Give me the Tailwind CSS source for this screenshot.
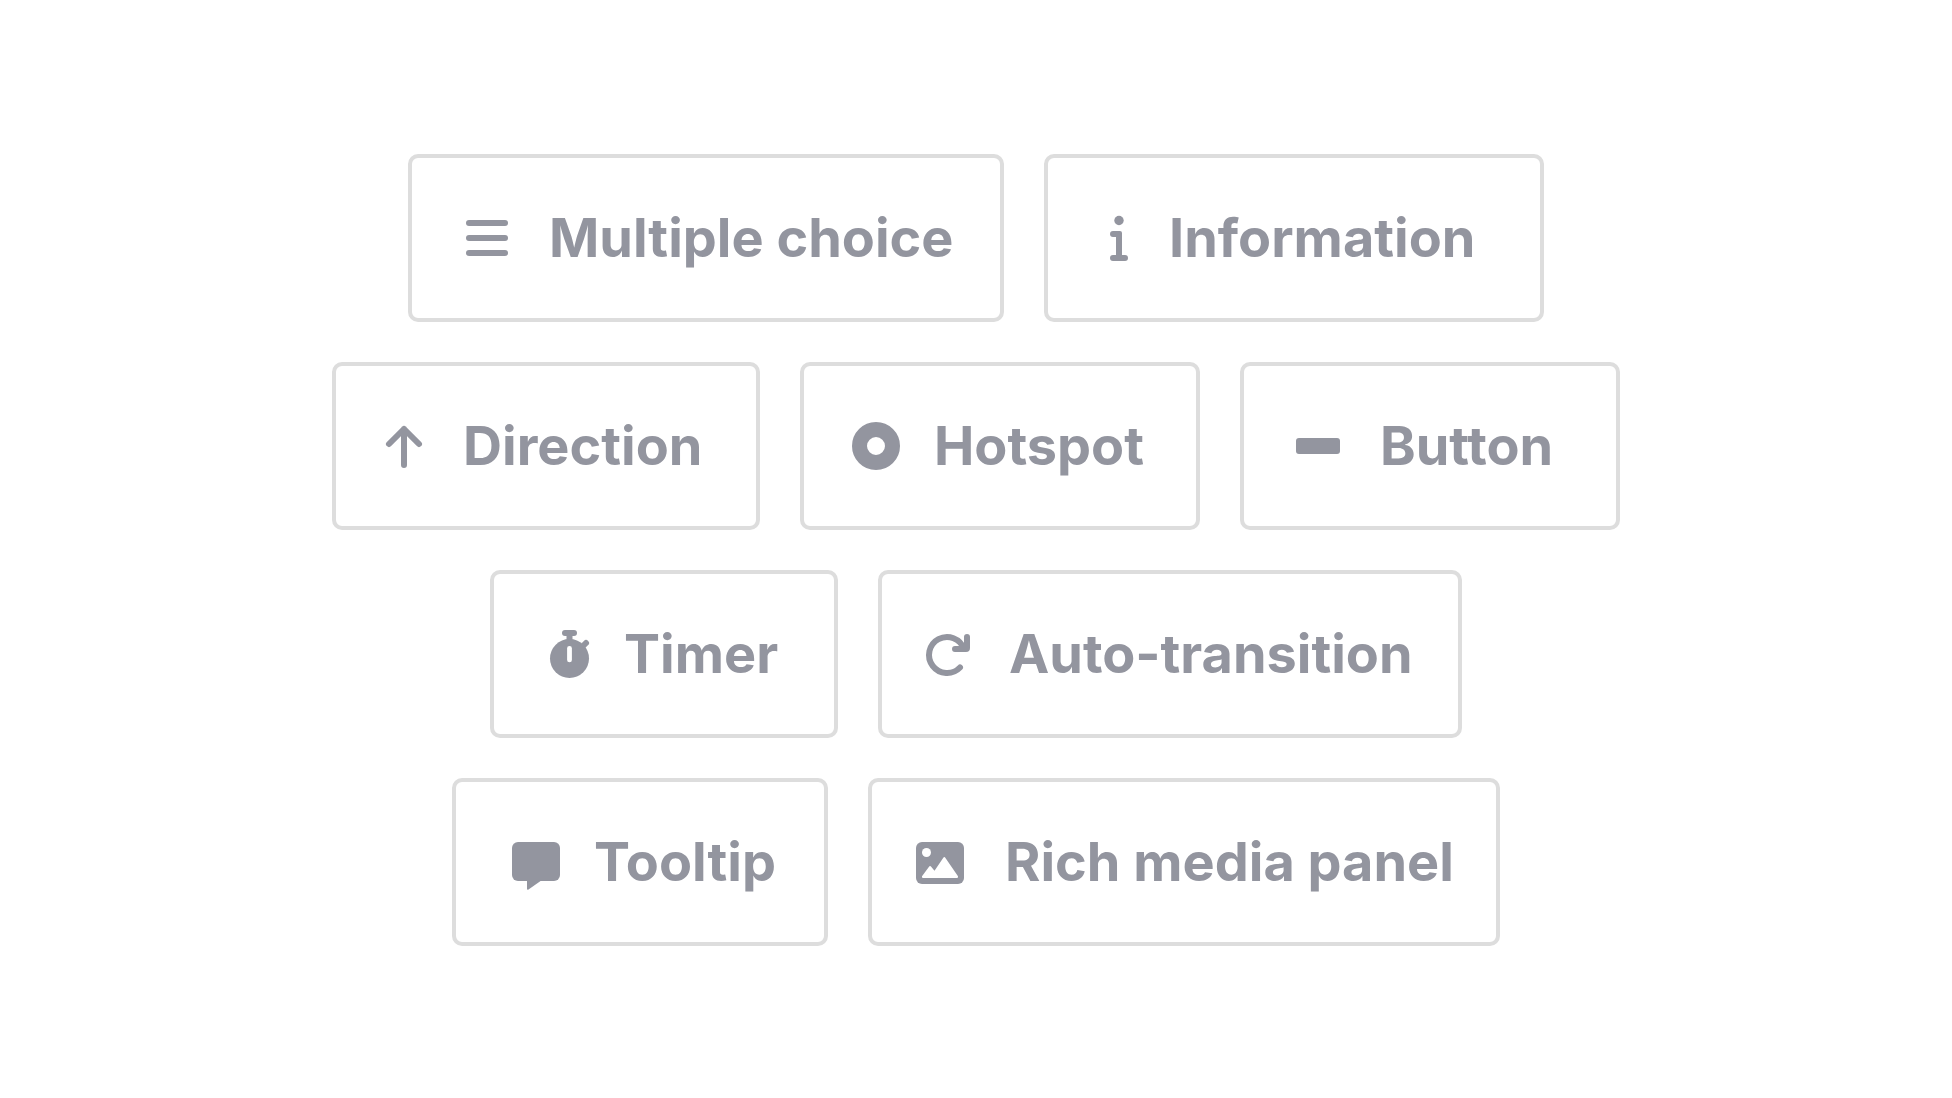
<!DOCTYPE html>
<html lang="en">
<head>
<meta charset="utf-8">
<meta name="viewport" content="width=device-width, initial-scale=1">
<title>Interaction types</title>
<script src="https://cdn.jsdelivr.net/npm/@tailwindcss/browser@4"></script>
</head>
<body class="bg-white">
<main class="flex min-h-screen flex-col items-center justify-center gap-10 pt-0.5 font-['Inter',sans-serif] text-[54px] leading-[64px] font-bold whitespace-nowrap text-[#93959f]">

  <div class="flex flex-wrap justify-center gap-10">
    <button type="button" class="flex h-[168px] w-[596px] items-center gap-[38px] rounded-[10px] border-4 border-[#ddd] pl-[51px]">
      <svg class="size-12 shrink-0" viewBox="0 0 48 48" fill="currentColor" aria-hidden="true"><rect x="3" y="6" width="42" height="6" rx="3"/><rect x="3" y="21" width="42" height="6" rx="3"/><rect x="3" y="36" width="42" height="6" rx="3"/></svg>
      <span>Multiple choice</span>
    </button>
    <button type="button" class="flex h-[168px] w-[500px] items-center gap-[26px] rounded-[10px] border-4 border-[#ddd] pl-[47px]">
      <svg class="size-12 shrink-0" viewBox="0 0 48 48" fill="currentColor" aria-hidden="true"><circle cx="24" cy="6.5" r="4.7"/><path d="M18 17h7a2 2 0 0 1 2 2v22h3a3 3 0 0 1 0 6H18a3 3 0 0 1 0-6h3V23h-3a3 3 0 0 1 0-6z"/></svg>
      <span>Information</span>
    </button>
  </div>

  <div class="flex flex-wrap justify-center gap-10">
    <button type="button" class="flex h-[168px] w-[428px] items-center gap-[35px] rounded-[10px] border-4 border-[#ddd] pl-[44px]">
      <svg class="size-12 shrink-0" viewBox="0 0 48 48" fill="none" stroke="currentColor" stroke-width="6" stroke-linecap="round" stroke-linejoin="round" aria-hidden="true"><path d="M9 22 24 7l15 15M24 7v36"/></svg>
      <span>Direction</span>
    </button>
    <button type="button" class="flex h-[168px] w-[400px] items-center gap-[34px] rounded-[10px] border-4 border-[#ddd] pl-[48px]">
      <svg class="size-12 shrink-0" viewBox="0 0 48 48" fill="none" stroke="currentColor" stroke-width="15" aria-hidden="true"><circle cx="24" cy="24" r="16.5"/></svg>
      <span>Hotspot</span>
    </button>
    <button type="button" class="flex h-[168px] w-[380px] items-center gap-[38px] rounded-[10px] border-4 border-[#ddd] pl-[50px]">
      <svg class="size-12 shrink-0" viewBox="0 0 48 48" fill="currentColor" aria-hidden="true"><rect x="2" y="16" width="44" height="16" rx="3"/></svg>
      <span>Button</span>
    </button>
  </div>

  <div class="flex flex-wrap justify-center gap-10">
    <button type="button" class="flex h-[168px] w-[348px] items-center gap-[30px] rounded-[10px] border-4 border-[#ddd] pl-[52px]">
      <svg class="size-12 shrink-0" viewBox="0 0 48 48" fill="currentColor" aria-hidden="true"><rect x="16" y="0" width="15" height="6" rx="3"/><path d="M20.5 5h6v6h-6z"/><circle cx="23.5" cy="28.5" r="19.5"/><path d="m40 13-6 6" stroke="currentColor" stroke-width="6" stroke-linecap="round"/><path d="M23.5 18.3v11.6" stroke="white" stroke-width="4.8" stroke-linecap="round"/></svg>
      <span>Timer</span>
    </button>
    <button type="button" class="flex h-[168px] w-[584px] items-center gap-[37px] rounded-[10px] border-4 border-[#ddd] pl-[42px]">
      <svg class="size-12 shrink-0" viewBox="0 0 48 48" fill="none" stroke="currentColor" stroke-width="6" stroke-linecap="round" aria-hidden="true"><path d="M36 37.5A18 18 0 1 1 40 19"/><path d="M31 19h11q1 0 1-1V7" stroke-linejoin="round"/></svg>
      <span>Auto-transition</span>
    </button>
  </div>

  <div class="flex flex-wrap justify-center gap-10">
    <button type="button" class="flex h-[168px] w-[376px] items-center gap-[34px] rounded-[10px] border-4 border-[#ddd] pl-[56px]">
      <svg class="size-12 shrink-0 overflow-visible" viewBox="0 0 48 48" fill="currentColor" aria-hidden="true"><rect x="0" y="4" width="48" height="39" rx="6"/><path d="M15 42v9q0 1.200 1.500 .6L30 42z"/></svg>
      <span>Tooltip</span>
    </button>
    <button type="button" class="flex h-[168px] w-[632px] items-center gap-[41px] rounded-[10px] border-4 border-[#ddd] pl-[44px]">
      <svg class="size-12 shrink-0" viewBox="0 0 48 48" fill="currentColor" aria-hidden="true"><rect x="0" y="4" width="48" height="42" rx="6"/><circle cx="10.500" cy="14.500" r="4.500" fill="white"/><path d="M7 38.500 14 29l4.500 5.500L28.300 20 41 38.500v.5H7z" fill="white" stroke="white" stroke-width="2" stroke-linejoin="round"/></svg>
      <span>Rich media panel</span>
    </button>
  </div>

</main>
</body>
</html>
